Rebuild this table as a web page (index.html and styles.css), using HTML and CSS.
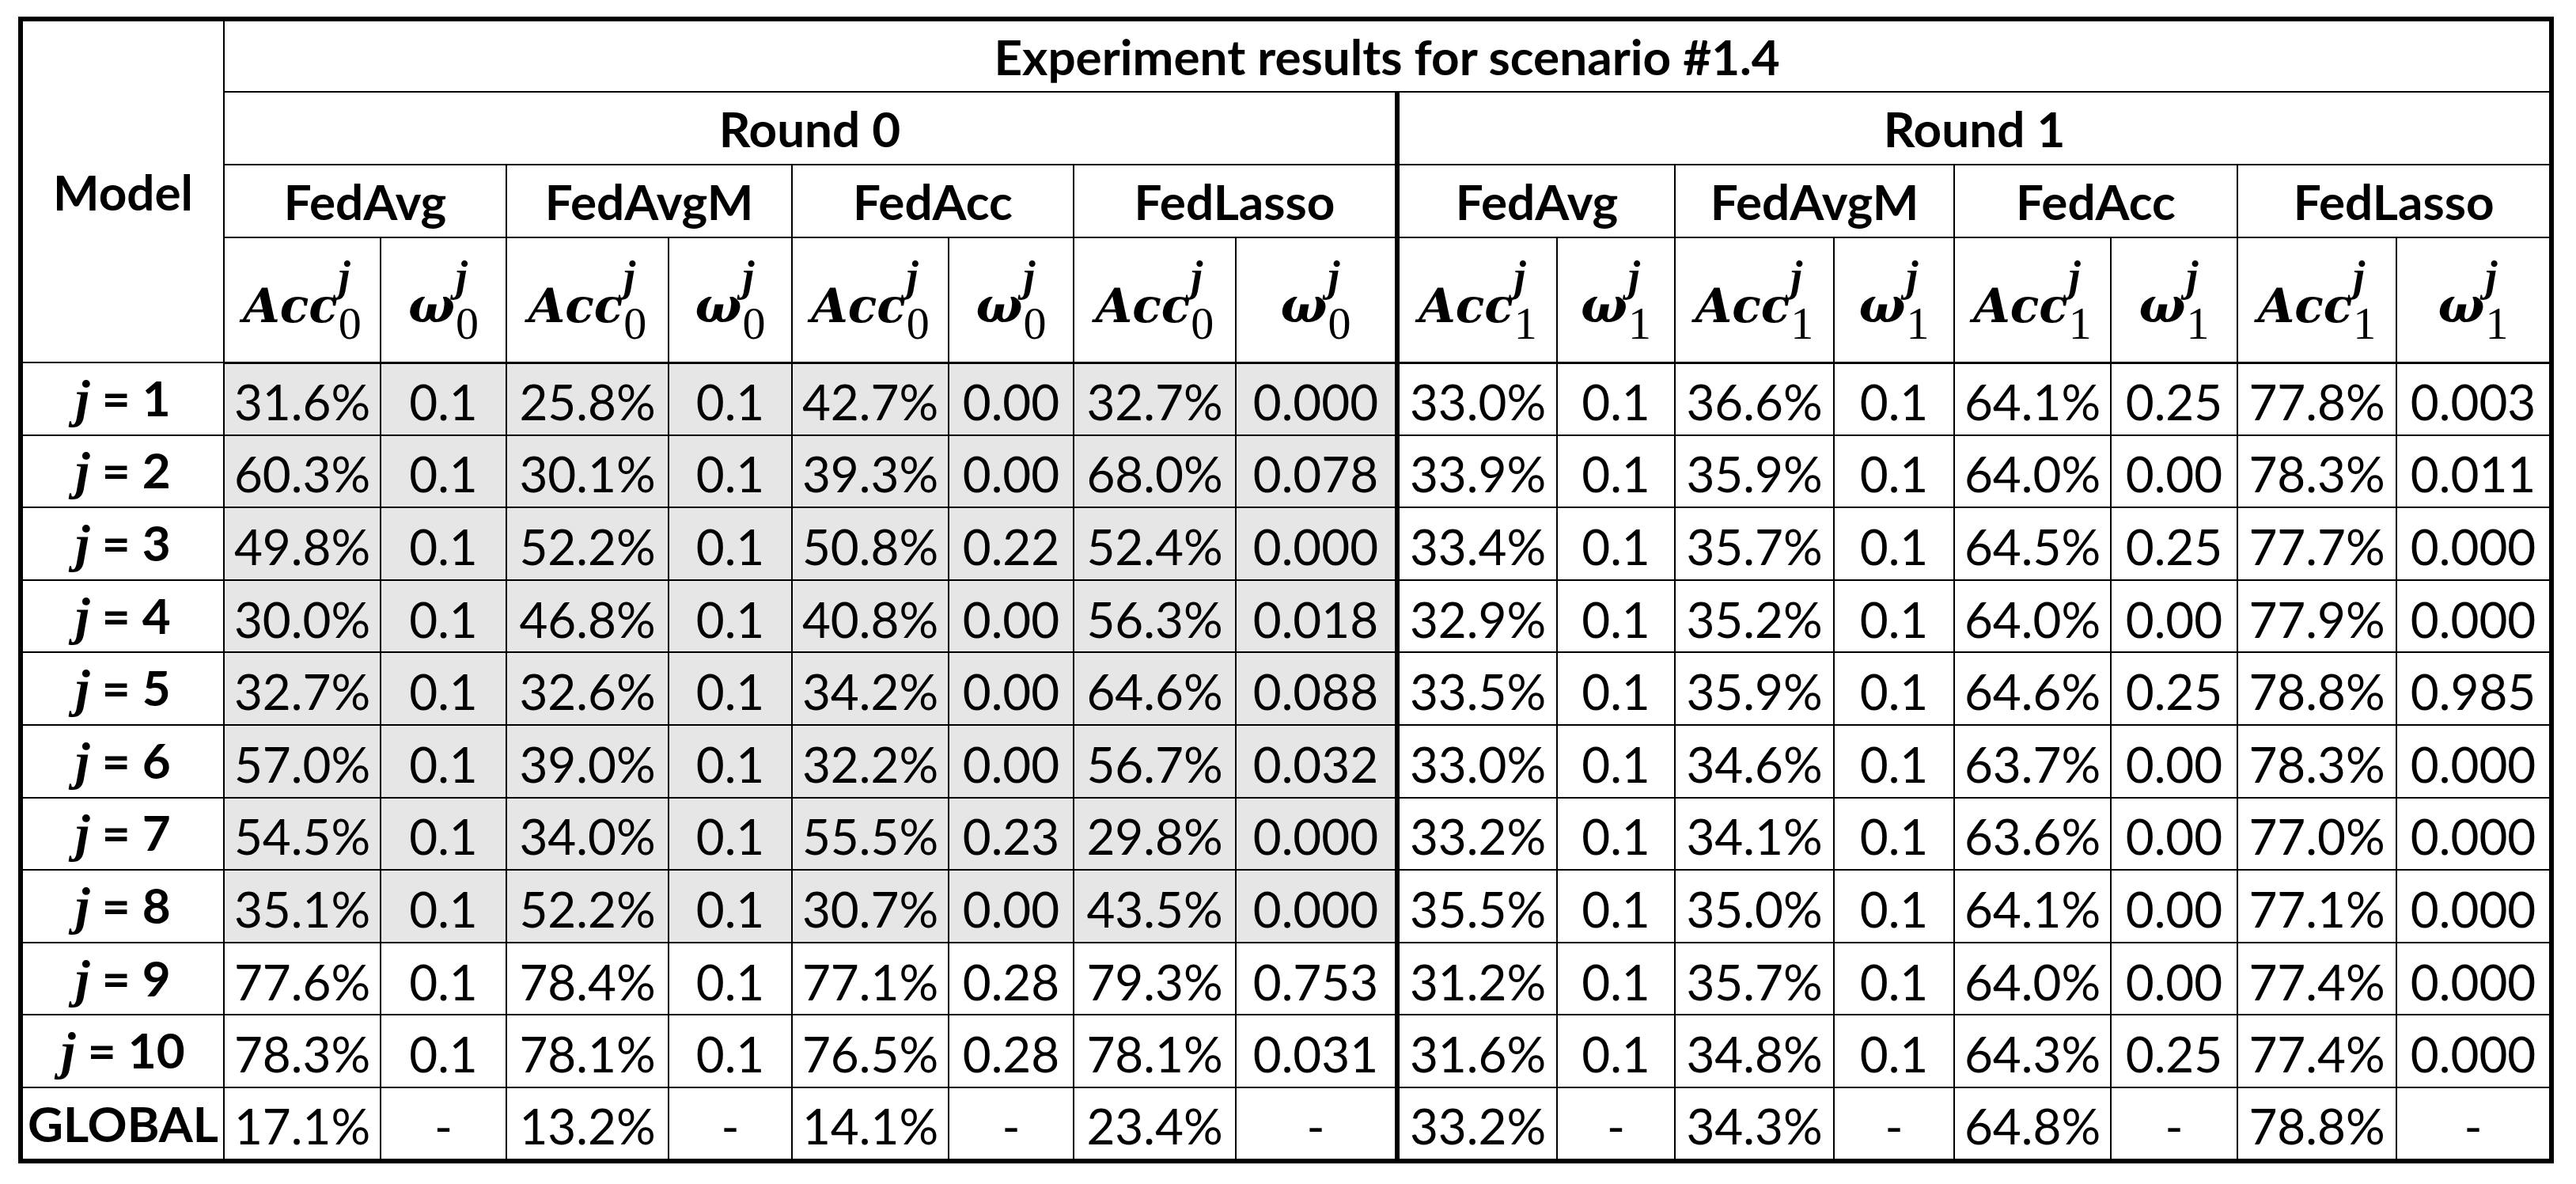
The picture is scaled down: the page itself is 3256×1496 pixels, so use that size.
FILE: index.html
```html
<!DOCTYPE html>
<html lang="en">
<head>
<meta charset="utf-8">
<title>Experiment results for scenario #1.4</title>
<link rel="stylesheet" href="styles.css">
</head>
<body>
<table class="results">
  <colgroup>
    <col class="c-model">
    <col class="c-a1"><col class="c-w1">
    <col class="c-a2"><col class="c-w2">
    <col class="c-a3"><col class="c-w3">
    <col class="c-a4"><col class="c-w4">
    <col class="c-a5"><col class="c-w5">
    <col class="c-a6"><col class="c-w6">
    <col class="c-a7"><col class="c-w7">
    <col class="c-a8"><col class="c-w8">
  </colgroup>
  <thead>
    <tr class="r-title">
      <th rowspan="4" class="model">Model</th>
      <th colspan="16">Experiment results for scenario #1.4</th>
    </tr>
    <tr class="r-round">
      <th colspan="8">Round 0</th>
      <th colspan="8" class="sep">Round 1</th>
    </tr>
    <tr class="r-method">
      <th colspan="2">FedAvg</th><th colspan="2">FedAvgM</th><th colspan="2">FedAcc</th><th colspan="2">FedLasso</th>
      <th colspan="2" class="sep">FedAvg</th><th colspan="2">FedAvgM</th><th colspan="2">FedAcc</th><th colspan="2">FedLasso</th>
    </tr>
    <tr class="r-sub">
      <th><span class="acc">Acc</span><span class="ss"><span class="sp">j</span><span class="sb">0</span></span></th>
      <th><span class="om">ω</span><span class="ss"><span class="sp">j</span><span class="sb">0</span></span></th>
      <th><span class="acc">Acc</span><span class="ss"><span class="sp">j</span><span class="sb">0</span></span></th>
      <th><span class="om">ω</span><span class="ss"><span class="sp">j</span><span class="sb">0</span></span></th>
      <th><span class="acc">Acc</span><span class="ss"><span class="sp">j</span><span class="sb">0</span></span></th>
      <th><span class="om">ω</span><span class="ss"><span class="sp">j</span><span class="sb">0</span></span></th>
      <th><span class="acc">Acc</span><span class="ss"><span class="sp">j</span><span class="sb">0</span></span></th>
      <th><span class="om">ω</span><span class="ss"><span class="sp">j</span><span class="sb">0</span></span></th>
      <th class="sep"><span class="acc">Acc</span><span class="ss"><span class="sp">j</span><span class="sb">1</span></span></th>
      <th><span class="om">ω</span><span class="ss"><span class="sp">j</span><span class="sb">1</span></span></th>
      <th><span class="acc">Acc</span><span class="ss"><span class="sp">j</span><span class="sb">1</span></span></th>
      <th><span class="om">ω</span><span class="ss"><span class="sp">j</span><span class="sb">1</span></span></th>
      <th><span class="acc">Acc</span><span class="ss"><span class="sp">j</span><span class="sb">1</span></span></th>
      <th><span class="om">ω</span><span class="ss"><span class="sp">j</span><span class="sb">1</span></span></th>
      <th><span class="acc">Acc</span><span class="ss"><span class="sp">j</span><span class="sb">1</span></span></th>
      <th><span class="om">ω</span><span class="ss"><span class="sp">j</span><span class="sb">1</span></span></th>
    </tr>
  </thead>
  <tbody>
    <tr>
      <th class="rowhead"><span class="mj">j</span> = 1</th>
      <td class="g">31.6%</td><td class="g">0.1</td><td class="g">25.8%</td><td class="g">0.1</td><td class="g">42.7%</td><td class="g">0.00</td><td class="g">32.7%</td><td class="g">0.000</td>
      <td class="sep">33.0%</td><td>0.1</td><td>36.6%</td><td>0.1</td><td>64.1%</td><td>0.25</td><td>77.8%</td><td>0.003</td>
    </tr>
    <tr>
      <th class="rowhead"><span class="mj">j</span> = 2</th>
      <td class="g">60.3%</td><td class="g">0.1</td><td class="g">30.1%</td><td class="g">0.1</td><td class="g">39.3%</td><td class="g">0.00</td><td class="g">68.0%</td><td class="g">0.078</td>
      <td class="sep">33.9%</td><td>0.1</td><td>35.9%</td><td>0.1</td><td>64.0%</td><td>0.00</td><td>78.3%</td><td>0.011</td>
    </tr>
    <tr>
      <th class="rowhead"><span class="mj">j</span> = 3</th>
      <td class="g">49.8%</td><td class="g">0.1</td><td class="g">52.2%</td><td class="g">0.1</td><td class="g">50.8%</td><td class="g">0.22</td><td class="g">52.4%</td><td class="g">0.000</td>
      <td class="sep">33.4%</td><td>0.1</td><td>35.7%</td><td>0.1</td><td>64.5%</td><td>0.25</td><td>77.7%</td><td>0.000</td>
    </tr>
    <tr>
      <th class="rowhead"><span class="mj">j</span> = 4</th>
      <td class="g">30.0%</td><td class="g">0.1</td><td class="g">46.8%</td><td class="g">0.1</td><td class="g">40.8%</td><td class="g">0.00</td><td class="g">56.3%</td><td class="g">0.018</td>
      <td class="sep">32.9%</td><td>0.1</td><td>35.2%</td><td>0.1</td><td>64.0%</td><td>0.00</td><td>77.9%</td><td>0.000</td>
    </tr>
    <tr>
      <th class="rowhead"><span class="mj">j</span> = 5</th>
      <td class="g">32.7%</td><td class="g">0.1</td><td class="g">32.6%</td><td class="g">0.1</td><td class="g">34.2%</td><td class="g">0.00</td><td class="g">64.6%</td><td class="g">0.088</td>
      <td class="sep">33.5%</td><td>0.1</td><td>35.9%</td><td>0.1</td><td>64.6%</td><td>0.25</td><td>78.8%</td><td>0.985</td>
    </tr>
    <tr>
      <th class="rowhead"><span class="mj">j</span> = 6</th>
      <td class="g">57.0%</td><td class="g">0.1</td><td class="g">39.0%</td><td class="g">0.1</td><td class="g">32.2%</td><td class="g">0.00</td><td class="g">56.7%</td><td class="g">0.032</td>
      <td class="sep">33.0%</td><td>0.1</td><td>34.6%</td><td>0.1</td><td>63.7%</td><td>0.00</td><td>78.3%</td><td>0.000</td>
    </tr>
    <tr>
      <th class="rowhead"><span class="mj">j</span> = 7</th>
      <td class="g">54.5%</td><td class="g">0.1</td><td class="g">34.0%</td><td class="g">0.1</td><td class="g">55.5%</td><td class="g">0.23</td><td class="g">29.8%</td><td class="g">0.000</td>
      <td class="sep">33.2%</td><td>0.1</td><td>34.1%</td><td>0.1</td><td>63.6%</td><td>0.00</td><td>77.0%</td><td>0.000</td>
    </tr>
    <tr>
      <th class="rowhead"><span class="mj">j</span> = 8</th>
      <td class="g">35.1%</td><td class="g">0.1</td><td class="g">52.2%</td><td class="g">0.1</td><td class="g">30.7%</td><td class="g">0.00</td><td class="g">43.5%</td><td class="g">0.000</td>
      <td class="sep">35.5%</td><td>0.1</td><td>35.0%</td><td>0.1</td><td>64.1%</td><td>0.00</td><td>77.1%</td><td>0.000</td>
    </tr>
    <tr>
      <th class="rowhead"><span class="mj">j</span> = 9</th>
      <td>77.6%</td><td>0.1</td><td>78.4%</td><td>0.1</td><td>77.1%</td><td>0.28</td><td>79.3%</td><td>0.753</td>
      <td class="sep">31.2%</td><td>0.1</td><td>35.7%</td><td>0.1</td><td>64.0%</td><td>0.00</td><td>77.4%</td><td>0.000</td>
    </tr>
    <tr>
      <th class="rowhead"><span class="mj">j</span> = 10</th>
      <td>78.3%</td><td>0.1</td><td>78.1%</td><td>0.1</td><td>76.5%</td><td>0.28</td><td>78.1%</td><td>0.031</td>
      <td class="sep">31.6%</td><td>0.1</td><td>34.8%</td><td>0.1</td><td>64.3%</td><td>0.25</td><td>77.4%</td><td>0.000</td>
    </tr>
    <tr class="r-global">
      <th class="rowhead">GLOBAL</th>
      <td>17.1%</td><td>-</td><td>13.2%</td><td>-</td><td>14.1%</td><td>-</td><td>23.4%</td><td>-</td>
      <td class="sep">33.2%</td><td>-</td><td>34.3%</td><td>-</td><td>64.8%</td><td>-</td><td>78.8%</td><td>-</td>
    </tr>
  </tbody>
</table>
</body>
</html>
```

FILE: styles.css
```css
html, body {
  margin: 0;
  padding: 0;
  background: #ffffff;
}

.results {
  border-collapse: collapse;
  table-layout: fixed;
  width: 3205px;
  margin: 21px 0 0 23px;
  border: 6px solid #000;
  font-family: Lato, "Liberation Sans", sans-serif;
  font-size: 62px;
  color: #000;
}

.c-model { width: 257px; }
.c-a1 { width: 198px; }
.c-w1 { width: 159px; }
.c-a2 { width: 205px; }
.c-w2 { width: 156px; }
.c-a3 { width: 198px; }
.c-w3 { width: 158px; }
.c-a4 { width: 205px; }
.c-w4 { width: 204px; }
.c-a5 { width: 202px; }
.c-w5 { width: 149px; }
.c-a6 { width: 201px; }
.c-w6 { width: 152px; }
.c-a7 { width: 198px; }
.c-w7 { width: 160px; }
.c-a8 { width: 201px; }
.c-w8 { width: 196px; }

.results th,
.results td {
  border: 2px solid #000;
  padding: 0;
  text-align: center;
  vertical-align: middle;
  line-height: 1;
  white-space: nowrap;
  overflow: visible;
}

.results td {
  font-weight: 400;
  padding-top: 6px;
}

.results th {
  font-weight: 700;
}

.results .sep {
  border-left: 6px solid #000;
}

.results .g {
  background: #e6e6e6;
}

.r-title { height: 92px; }
.r-round { height: 92px; }
.r-method { height: 92px; }
.r-sub { height: 158px; }
.results tbody tr { height: 91.6px; }
.results tbody tr.r-global { height: 93px; }

.r-sub th {
  border-bottom-width: 3px;
  font-weight: 400;
}

.model {
  padding-top: 4px;
}

.rowhead {
  padding-top: 4px;
}

.mj {
  font-family: "Liberation Serif", "DejaVu Serif", serif;
  font-style: italic;
  font-weight: 700;
  font-size: 66px;
}

.acc,
.om {
  font-family: "DejaVu Serif", "Liberation Serif", serif;
  font-style: italic;
  font-weight: 700;
  font-size: 60px;
}

.om {
  font-size: 62px;
}

.ss {
  display: inline-flex;
  flex-direction: column;
  align-items: flex-start;
  vertical-align: 40px;
  margin-left: 1px;
}

.sp {
  display: block;
  font-family: "Liberation Serif", "DejaVu Serif", serif;
  font-style: italic;
  font-weight: 700;
  font-size: 54px;
  line-height: 42px;
  height: 42px;
}

.sb {
  display: block;
  font-family: "Liberation Serif", "DejaVu Serif", serif;
  font-weight: 400;
  font-size: 58px;
  line-height: 42px;
  height: 42px;
  margin-top: 18px;
}
```
